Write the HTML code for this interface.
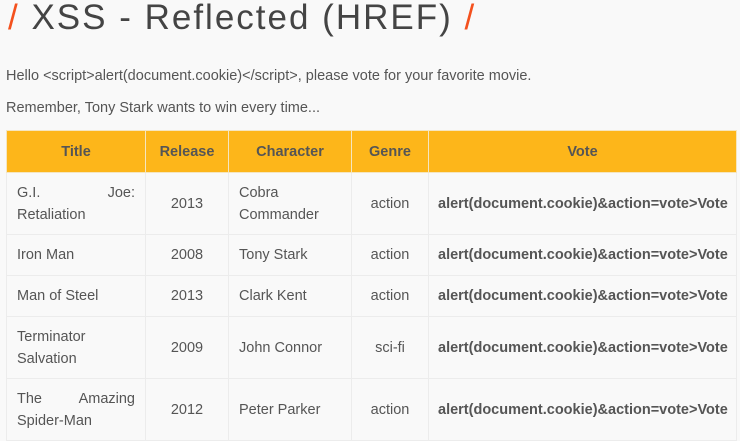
<!DOCTYPE html>
<html><head><style>
body{margin:0;background:#f9f9f9;font-family:"Liberation Sans",sans-serif;color:#555;font-size:14.5px;width:740px;height:407px;overflow:hidden;position:relative}
h1{position:absolute;left:8px;top:-2px;margin:0;font-weight:normal;font-size:35px;color:#444;letter-spacing:2px;white-space:nowrap}
h1 span{color:#f4511e}
p{position:absolute;left:6px;margin:0;white-space:nowrap}
table{position:absolute;left:6px;top:130px;border-collapse:collapse;width:730px;table-layout:fixed}
th{background:#fdb61a;color:#555;font-weight:bold;height:41px;border:1px solid #f5e6c0;padding:0}
td{border:1px solid #ececec;padding:0 10px;height:39px;background:#f9f9f9;line-height:22px}
td.c{text-align:center}
td.v{font-weight:bold;white-space:nowrap;padding:0 6px 0 9px}
</style></head><body>
<h1><span>/</span> XSS - Reflected (HREF) <span>/</span></h1>
<p style="top:68px">Hello &lt;script&gt;alert(document.cookie)&lt;/script&gt;, please vote for your favorite movie.</p>
<p style="top:100px">Remember, Tony Stark wants to win every time...</p>
<table>
<colgroup><col style="width:139px"><col style="width:83px"><col style="width:123px"><col style="width:77px"><col style="width:308px"></colgroup>
<tr><th>Title</th><th>Release</th><th>Character</th><th>Genre</th><th>Vote</th></tr>
<tr style="height:62px"><td><div style="display:flex;justify-content:space-between"><span>G.I.</span><span>Joe:</span></div>Retaliation</td><td class="c">2013</td><td>Cobra<br>Commander</td><td class="c">action</td><td class="v">alert(document.cookie)&amp;action=vote&gt;Vote</td></tr>
<tr style="height:41px"><td>Iron Man</td><td class="c">2008</td><td>Tony Stark</td><td class="c">action</td><td class="v">alert(document.cookie)&amp;action=vote&gt;Vote</td></tr>
<tr style="height:41px"><td>Man of Steel</td><td class="c">2013</td><td>Clark Kent</td><td class="c">action</td><td class="v">alert(document.cookie)&amp;action=vote&gt;Vote</td></tr>
<tr style="height:62px"><td>Terminator<br>Salvation</td><td class="c">2009</td><td>John Connor</td><td class="c">sci-fi</td><td class="v">alert(document.cookie)&amp;action=vote&gt;Vote</td></tr>
<tr style="height:62px"><td><div style="display:flex;justify-content:space-between"><span>The</span><span>Amazing</span></div>Spider-Man</td><td class="c">2012</td><td>Peter Parker</td><td class="c">action</td><td class="v">alert(document.cookie)&amp;action=vote&gt;Vote</td></tr>
</table>
</body></html>
